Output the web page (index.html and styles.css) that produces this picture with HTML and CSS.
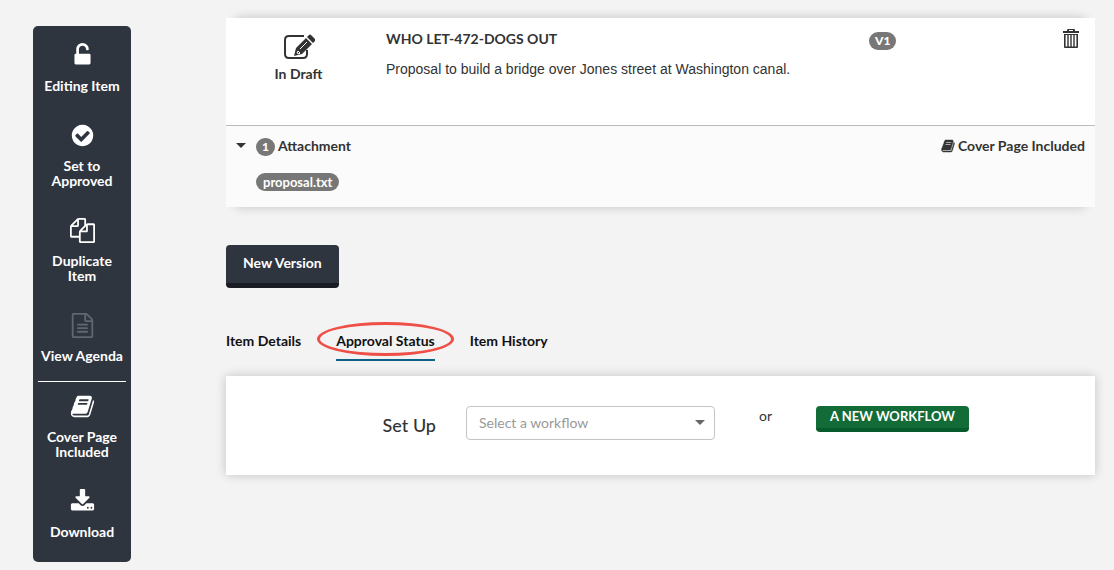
FILE: index.html
```html
<!DOCTYPE html>
<html lang="en">
<head>
  <meta charset="UTF-8">
  <meta name="viewport" content="width=device-width, initial-scale=1.0">
  <title>WHO LET-472-DOGS OUT</title>
  <link rel="stylesheet" href="styles.css">
</head>
<body>
  <svg width="0" height="0" class="sprite">
    <symbol id="book" viewBox="0 0 1792 1792">
      <path d="M1703 478q40 57 18 129l-275 906q-19 64-76.5 107.5t-122.5 43.5h-923q-77 0-148.5-53.5t-99.5-131.5q-24-67-2-127 0-4 3-27t4-37q1-8-3-21.5t-3-19.5q2-11 8-21t16.5-23.5 16.5-23.5q23-38 45-91.5t30-91.5q3-10 .5-30t-.5-28q3-11 17-28t17-23q21-36 42-92t25-90q1-9-2.5-32t.5-28q4-13 22-30.5t22-22.5q19-26 42.5-84.5t27.5-96.5q1-8-3-25.5t-2-26.5q2-8 9-18t18-23 17-21q8-12 16.5-30.5t15-35 16-36 19.5-32 26.5-23.5 36-11.5 47.5 5.5l-1 3q38-9 51-9h761q74 0 114 56t18 130l-274 906q-36 119-71.5 153.5t-128.5 34.5h-869q-27 0-38 15-11 16-1 43 24 70 144 70h923q29 0 56-15.5t35-41.5l300-987q7-22 5-57 38 15 59 43zm-1064 2q-4 13 2 22.5t20 9.5h608q13 0 25.5-9.5t16.5-22.5l21-64q4-13-2-22.5t-20-9.5h-608q-13 0-25.5 9.5t-16.5 22.5zm-83 256q-4 13 2 22.5t20 9.5h608q13 0 25.5-9.5t16.5-22.5l21-64q4-13-2-22.5t-20-9.5h-608q-13 0-25.5 9.5t-16.5 22.5z"/>
    </symbol>
  </svg>
  <div class="page">
    <nav class="sidebar">
      <a href="#" class="action">
        <svg class="icon" viewBox="0 0 1792 1792"><path d="M1376 768q40 0 68 28t28 68v576q0 40-28 68t-68 28h-960q-40 0-68-28t-28-68v-576q0-40 28-68t68-28h32v-320q0-185 131.5-316.5t316.5-131.5 316.5 131.5 131.5 316.5q0 26-19 45t-45 19h-64q-26 0-45-19t-19-45q0-106-75-181t-181-75-181 75-75 181v320h736z"/></svg>
        <span>Editing Item</span>
      </a>
      <a href="#" class="action">
        <svg class="icon" viewBox="0 0 1792 1792"><path d="M1412 734q0-28-18-46l-91-90q-19-19-45-19t-45 19l-408 407-226-226q-19-19-45-19t-45 19l-91 90q-18 18-18 46 0 27 18 45l362 362q19 19 45 19 27 0 46-19l543-543q18-18 18-45zm252 162q0 209-103 385.5t-279.5 279.5-385.5 103-385.5-103-279.5-279.5-103-385.5 103-385.5 279.5-279.5 385.5-103 385.5 103 279.5 279.5 103 385.5z"/></svg>
        <span>Set to<br>Approved</span>
      </a>
      <a href="#" class="action">
        <svg class="icon" viewBox="0 0 1792 1792"><path d="M1696 384q40 0 68 28t28 68v1216q0 40-28 68t-68 28h-960q-40 0-68-28t-28-68v-288h-544q-40 0-68-28t-28-68v-672q0-40 20-88t48-76l408-408q28-28 76-48t88-20h416q40 0 68 28t28 68v328q68-40 128-40h416zm-544 213l-299 299h299v-299zm-640-384l-299 299h299v-299zm196 647l316-316v-416h-384v416q0 40-28 68t-68 28h-416v640h512v-256q0-40 20-88t48-76zm956 804v-1152h-384v416q0 40-28 68t-68 28h-416v640h896z"/></svg>
        <span>Duplicate<br>Item</span>
      </a>
      <a href="#" class="action view-agenda">
        <svg class="icon" viewBox="0 0 1792 1792"><path d="M1596 380q28 28 48 76t20 88v1152q0 40-28 68t-68 28h-1344q-40 0-68-28t-28-68v-1600q0-40 28-68t68-28h896q40 0 88 20t76 48zm-444-244v376h376q-10-29-22-41l-313-313q-12-12-41-22zm384 1528v-1024h-416q-40 0-68-28t-28-68v-416h-768v1536h1280zm-1024-864q0-14 9-23t23-9h704q14 0 23 9t9 23v64q0 14-9 23t-23 9h-704q-14 0-23-9t-9-23v-64zm736 224q14 0 23 9t9 23v64q0 14-9 23t-23 9h-704q-14 0-23-9t-9-23v-64q0-14 9-23t23-9h704zm0 256q14 0 23 9t9 23v64q0 14-9 23t-23 9h-704q-14 0-23-9t-9-23v-64q0-14 9-23t23-9h704z"/></svg>
        <span>View Agenda</span>
      </a>
      <a href="#" class="action cover-page">
        <svg class="icon"><use href="#book"/></svg>
        <span>Cover Page<br>Included</span>
      </a>
      <a href="#" class="action">
        <svg class="icon" viewBox="0 0 1792 1792"><path d="M1344 1344q0-26-19-45t-45-19-45 19-19 45 19 45 45 19 45-19 19-45zm256 0q0-26-19-45t-45-19-45 19-19 45 19 45 45 19 45-19 19-45zm128-224v320q0 40-28 68t-68 28h-1472q-40 0-68-28t-28-68v-320q0-40 28-68t68-28h465l135 136q58 56 136 56t136-56l136-136h464q40 0 68 28t28 68zm-325-569q17 41-14 70l-448 448q-18 19-45 19t-45-19l-448-448q-31-29-14-70 17-39 59-39h256v-448q0-26 19-45t45-19h256q26 0 45 19t19 45v448h256q42 0 59 39z"/></svg>
        <span>Download</span>
      </a>
    </nav>

    <main class="content">
      <section class="item-card">
        <div class="item-summary">
          <div class="item-status">
            <svg class="draft-icon" viewBox="0 0 32 26">
              <path d="M21 2H6Q2 2 2 6v14q0 4 4 4h14q4 0 4-4v-4" fill="none" stroke="currentColor" stroke-width="2"/>
              <path d="M11 22l2-8L23 4l6 6-10 10zM24 3l2-2q1-1 2 0l4 4q1 1 0 2l-2 2z"/>
              <path d="M14 19l1-2 2 2-1 1zM17 15l7-7" stroke="#fff" stroke-width="1" fill="none"/>
            </svg>
            <span>In Draft</span>
          </div>
          <div class="item-text">
            <h1>WHO LET-472-DOGS OUT</h1>
            <p>Proposal to build a bridge over Jones street at Washington canal.</p>
          </div>
          <div class="item-tools">
            <span class="badge">V1</span>
            <button class="delete" aria-label="Delete">
              <svg viewBox="0 0 16 20">
                <path d="M4 2V1q0-1 1-1h6q1 0 1 1v1h4v2H0V2zM6 2h4V1H6z"/>
                <path d="M1 5h14v13q0 1-1 1H2q-1 0-1-1zM2.600 6v11.500h1.700V6zm3.100 0v11.500h1.600V6zm3 0v11.500h1.600V6zm3 0v11.500h1.700V6z" fill-rule="evenodd"/>
              </svg>
            </button>
          </div>
        </div>
        <div class="attachments">
          <button class="toggle" aria-label="Toggle attachments"></button>
          <div class="attachment-list">
            <div class="attachment-title"><span class="badge count">1</span> Attachment</div>
            <a href="#" class="badge file">proposal.txt</a>
          </div>
          <div class="cover-note"><svg class="book-icon"><use href="#book"/></svg>Cover Page Included</div>
        </div>
      </section>

      <button class="new-version">New Version</button>

      <nav class="tabs">
        <a href="#">Item Details</a>
        <a href="#" class="active">Approval Status</a>
        <a href="#">Item History</a>
      </nav>

      <section class="workflow">
        <label for="workflow">Set Up</label>
        <div class="select-box">
          <select id="workflow">
            <option>Select a workflow</option>
          </select>
        </div>
        <span class="or">or</span>
        <div class="new-workflow">
          <button>A NEW WORKFLOW</button>
        </div>
      </section>
    </main>
  </div>
</body>
</html>
```
FILE: styles.css
```css
*, *::after {
  box-sizing: border-box;
}
body {
  margin: 0;
  background-color: #f3f3f3;
  color: #333;
  font-family: Lato, sans-serif;
  font-size: 14px;
  line-height: 20px;
}
a {
  color: inherit;
  text-decoration: none;
}
button, select {
  font-family: inherit;
  font-size: 14px;
  cursor: pointer;
}
.sprite {
  position: absolute;
}
.page {
  display: flex;
  align-items: flex-start;
  gap: 95px;
  padding: 18px 19px 0 33px;
}

/* sidebar */
.sidebar {
  flex: 0 0 98px;
  margin-top: 8px;
  padding: 2px 5px 8px;
  border-radius: 5px;
  background-color: #2f353f;
  color: #fff;
  font-weight: 700;
  line-height: 15px;
  text-align: center;
}
.action {
  display: flex;
  flex-direction: column;
  align-items: center;
  gap: 10px;
  padding: 15px 0;
  white-space: nowrap;
}
.icon {
  width: 25px;
  height: 25px;
  fill: currentColor;
}
.view-agenda {
  padding-bottom: 18px;
}
.view-agenda .icon {
  fill: #62666e;
}
.cover-page {
  padding: 12px 0 15px;
  border-top: 1px solid #fff;
}

/* item */
.content {
  flex: 1;
  min-width: 0;
}
.item-card {
  box-shadow: 0 10px 10px -10px rgba(0,0,0,0.2), 0 -10px 10px -10px rgba(0,0,0,0.2);
}
.item-summary {
  display: grid;
  grid-template-columns: 145fr 483fr 241fr;
  min-height: 107px;
  background-color: #fff;
}
.item-status {
  display: flex;
  flex-direction: column;
  align-items: center;
  gap: 4px;
  padding-top: 16px;
  font-weight: 700;
}
.draft-icon {
  width: 32px;
  height: 26px;
  fill: currentColor;
}
.item-text {
  padding: 11px 15px;
}
.item-text h1 {
  margin: 0 0 10px;
  font-size: 14px;
  line-height: 20px;
}
.item-text p {
  margin: 0;
  font-family: "Liberation Sans", Arial, sans-serif;
}
.item-tools {
  display: flex;
  justify-content: space-between;
  align-items: flex-start;
  padding: 11px 16px 0 15px;
}
.badge {
  display: inline-block;
  padding: 0 6px;
  border-radius: 10px;
  background-color: #777;
  color: #fff;
  font-size: 12px;
  font-weight: 900;
  line-height: 18px;
}
.item-tools .badge {
  margin-top: 3px;
}
.file {
  padding: 0 7px;
  font-size: 13px;
  font-weight: 700;
}
.delete {
  padding: 0;
  border: none;
  background: none;
  color: #333;
}
.delete svg {
  display: block;
  width: 16px;
  height: 20px;
  fill: currentColor;
}
.attachments {
  display: flex;
  align-items: flex-start;
  padding: 10px 10px 15px;
  border-top: 1px solid #bbb;
  background-color: #fbfbfb;
}
.toggle {
  width: 10px;
  height: 5px;
  margin: 7px 10px 0 0;
  padding: 0;
  border: 5px solid transparent;
  border-top-color: #333;
  border-bottom: none;
  background: none;
}
.attachment-list {
  flex: 1;
}
.attachment-title, .cover-note {
  font-weight: 700;
}
.attachment-title {
  margin-bottom: 16px;
}
.book-icon {
  width: 14px;
  height: 14px;
  margin-right: 3px;
  vertical-align: -2px;
  fill: currentColor;
  stroke: currentColor;
  stroke-width: 60px;
}

/* buttons and tabs */
.new-version {
  display: block;
  margin-top: 38px;
  padding: 8px 17px 11px;
  border: none;
  border-bottom: 5px solid #191c22;
  border-radius: 4px;
  background-color: #2f353f;
  color: #fff;
  font-weight: 700;
  line-height: 19px;
}
.tabs {
  display: flex;
  gap: 35px;
  margin: 43px 0 15px;
  color: #111;
  font-weight: 700;
}
.tabs a {
  position: relative;
  padding-bottom: 8px;
  border-bottom: 2px solid transparent;
}
.tabs .active {
  border-bottom-color: #0b6285;
}
.tabs .active::after {
  content: "";
  position: absolute;
  top: -9px;
  left: -19px;
  right: -19px;
  height: 34px;
  border: 3px solid #ee4f46;
  border-radius: 50%;
}

/* workflow */
.workflow {
  display: grid;
  grid-template-columns: 225fr 279fr 71fr 294fr;
  align-items: start;
  padding: 30px 0 35px;
  background-color: #fff;
  box-shadow: 0 0 10px rgba(0,0,0,0.2);
}
.workflow label {
  padding: 9px 15px 0 0;
  font-size: 18px;
  font-weight: 500;
  text-align: right;
}
.select-box {
  position: relative;
  padding: 0 15px;
}
.select-box::after {
  content: "";
  position: absolute;
  top: 14px;
  right: 25px;
  border: 5px solid transparent;
  border-top-color: #666;
  border-bottom: none;
  pointer-events: none;
}
.select-box select {
  width: 100%;
  height: 34px;
  padding: 0 12px 2px;
  border: 1px solid #c4c4c4;
  border-radius: 4px;
  background-color: #fff;
  color: #999;
  appearance: none;
}
.or {
  text-align: center;
}
.new-workflow {
  padding-left: 15px;
}
.new-workflow button {
  display: block;
  padding: 0 14px 2px;
  border: none;
  border-bottom: 4px solid #075a2b;
  border-radius: 4px;
  background-color: #136c38;
  color: #fff;
  font-size: 13px;
  font-weight: 700;
  line-height: 20px;
}
```
